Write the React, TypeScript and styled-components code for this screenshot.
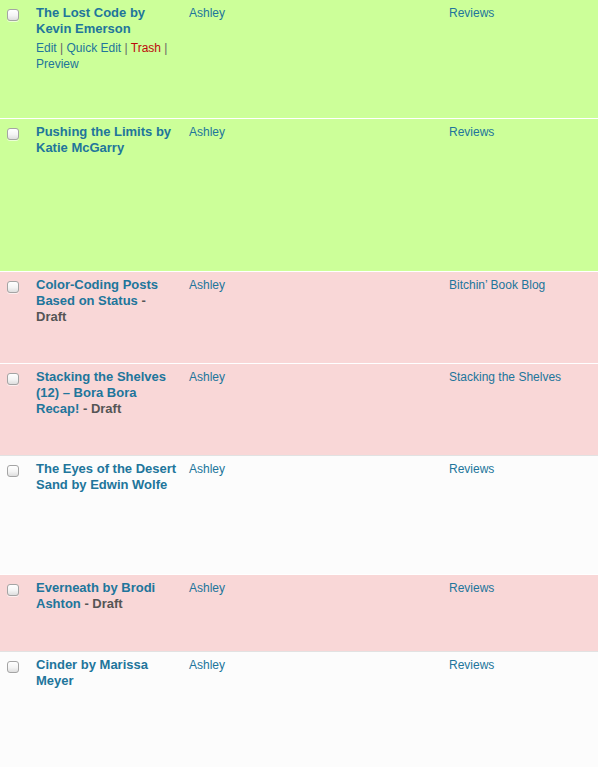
import React from "react";
import styled, { createGlobalStyle } from "styled-components";

const Global = createGlobalStyle`
  html, body { margin: 0; padding: 0; background: #fcfcfc; }
  body { font-family: "Liberation Sans", Arial, sans-serif; overflow: hidden; }
`;

type Tone = "published" | "draft" | "plain";

const toneBg: Record<Tone, string> = {
  published: "#ccff99",
  draft: "#f9d7d7",
  plain: "#fcfcfc",
};

const Table = styled.div`
  margin-top: -1px;
  width: 598px;
`;

const Row = styled.div<{ $tone: Tone; $h: number }>`
  display: grid;
  grid-template-columns: 28px 153px 260px 1fr;
  align-items: start;
  height: ${(p) => p.$h}px;
  box-sizing: border-box;
  background: ${(p) => toneBg[p.$tone]};
  border-top: 1px solid ${(p) => (p.$tone === "plain" ? "#e2e2e2" : "#ffffff")};
`;

const CheckCell = styled.div`
  padding: 9px 0 0 7px;
`;

const Check = styled.input`
  appearance: none;
  -webkit-appearance: none;
  margin: 0;
  display: block;
  width: 12px;
  height: 12px;
  box-sizing: border-box;
  border: 1px solid #a4a4a4;
  border-radius: 3px;
  background: linear-gradient(#ffffff, #f4f4f4 55%, #dedede);
  box-shadow: 0 1px 0 rgba(255, 255, 255, 0.6);
`;

const TitleCell = styled.div`
  padding: 5px 3px 0 8px;
`;

const Title = styled.div`
  font-size: 13px;
  line-height: 16px;
  font-weight: bold;
  color: #21759b;
`;

const State = styled.span`
  color: #555555;
`;

const Actions = styled.div`
  margin-top: 3px;
  font-size: 12px;
  line-height: 16px;
  color: #666666;
`;

const Action = styled.span<{ $danger?: boolean }>`
  color: ${(p) => (p.$danger ? "#bc0b0b" : "#21759b")};
`;

const Sep = styled.span`
  color: #666666;
`;

const TextCell = styled.div`
  padding: 5px 0 0 8px;
  font-size: 12px;
  line-height: 16px;
  color: #21759b;
`;

type Post = {
  title: string;
  tone: Tone;
  h: number;
  category: string;
  draft?: boolean;
  actions?: boolean;
};

const posts: Post[] = [
  { title: "The Lost Code by Kevin Emerson", tone: "published", h: 119, category: "Reviews", actions: true },
  { title: "Pushing the Limits by Katie McGarry", tone: "published", h: 153, category: "Reviews" },
  { title: "Color-Coding Posts Based on Status", tone: "draft", h: 92, category: "Bitchin\u2019 Book Blog", draft: true },
  { title: "Stacking the Shelves (12) \u2013 Bora Bora Recap!", tone: "draft", h: 92, category: "Stacking the Shelves", draft: true },
  { title: "The Eyes of the Desert Sand by Edwin Wolfe", tone: "plain", h: 119, category: "Reviews" },
  { title: "Everneath by Brodi Ashton", tone: "draft", h: 77, category: "Reviews", draft: true },
  { title: "Cinder by Marissa Meyer", tone: "plain", h: 140, category: "Reviews" },
];

export default function App() {
  return (
    <>
      <Global />
      <Table>
        {posts.map((p, i) => (
          <Row key={i} $tone={p.tone} $h={p.h}>
            <CheckCell>
              <Check type="checkbox" />
            </CheckCell>
            <TitleCell>
              <Title>
                {p.title}
                {p.draft && <State> - Draft</State>}
              </Title>
              {p.actions && (
                <Actions>
                  <Action>Edit</Action> <Sep>|</Sep> <Action>Quick&nbsp;Edit</Action> <Sep>|</Sep>{" "}
                  <Action $danger>Trash</Action> <Sep>|</Sep> <Action>Preview</Action>
                </Actions>
              )}
            </TitleCell>
            <TextCell>Ashley</TextCell>
            <TextCell>{p.category}</TextCell>
          </Row>
        ))}
      </Table>
    </>
  );
}
